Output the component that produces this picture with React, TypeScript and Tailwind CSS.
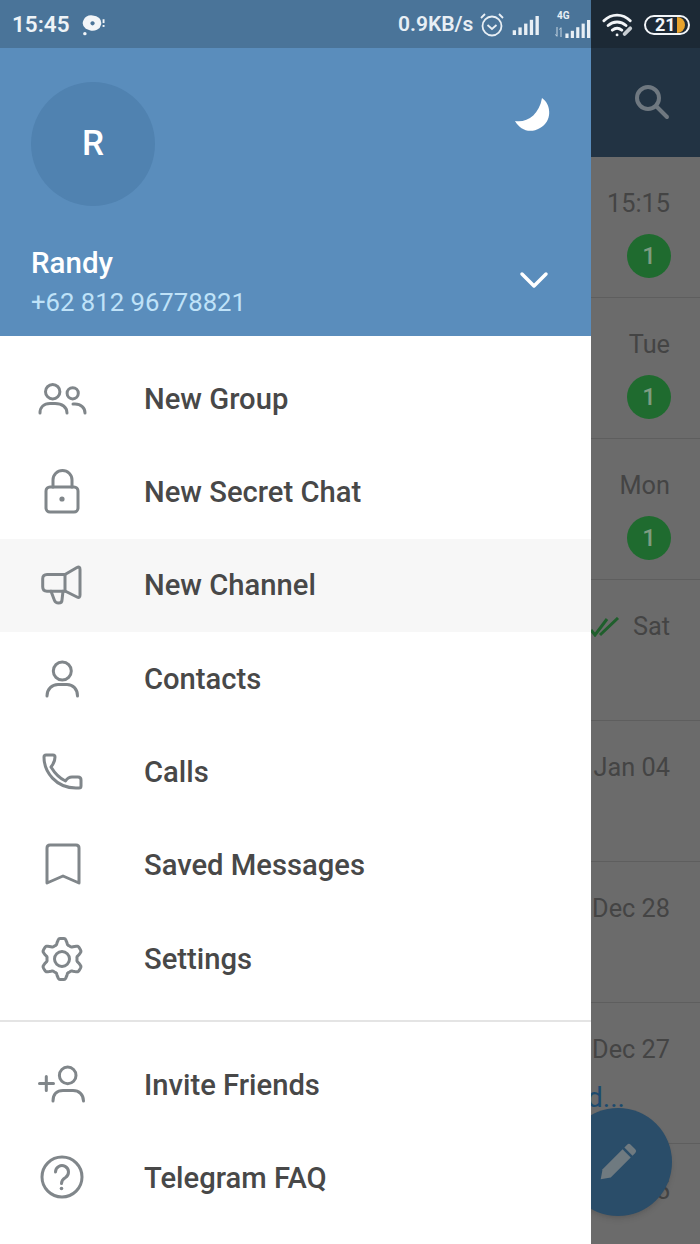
import React from "react"

const font = { fontFamily: "Roboto, sans-serif" }

// six lobed gear outline, telegram style
const gearPath = () => {
  const pts: string[] = []
  for (let i = 0; i < 120; i++) {
    const a = (i / 120) * Math.PI * 2
    const c = Math.max(-1, Math.min(1, 1.5 * Math.cos(6 * a)))
    const r = 17.8 - 2.8 * c
    pts.push(`${(30 + r * Math.cos(a)).toFixed(2)} ${(30 + r * Math.sin(a)).toFixed(2)}`)
  }
  return `M${pts.join("L")}Z`
}

const Icon = ({ children }: { children: React.ReactNode }) => (
  <svg
    width="60"
    height="60"
    viewBox="0 0 60 60"
    fill="none"
    stroke="#80868a"
    strokeWidth="3"
    strokeLinecap="round"
    strokeLinejoin="round"
    className="shrink-0"
  >
    {children}
  </svg>
)

const menu: { label: string; active?: boolean; icon: React.ReactNode }[] = [
  {
    label: "New Group",
    icon: (
      <>
        <circle cx="20.7" cy="22.7" r="7.2" />
        <circle cx="40.7" cy="24.3" r="5.6" />
        <path d="M8 44c0-6 4-9.500 10-9.500h5c7 0 12 3.500 12 9.500" />
        <path d="M41 35h2c6 0 10 4 10 9" />
      </>
    ),
  },
  {
    label: "New Secret Chat",
    icon: (
      <>
        <rect x="14" y="25" width="32" height="25" rx="4" />
        <path d="M21 25v-7a9.500 9.500 0 0 1 19 0v7" />
        <circle cx="30" cy="37" r="2.600" fill="#80868a" stroke="none" />
      </>
    ),
  },
  {
    label: "New Channel",
    active: true,
    icon: (
      <>
        <path d="M33 19.500H15q-4.300 0-4.300 4.300v8q0 4.400 4.300 4.400h18z" />
        <path d="M33 19.500l12-7q3-1.500 3 2v25.500q0 3.500-3 2l-12-6" />
        <path d="M19 36.200l3.500 9.300q1 2.500 4 2.500 3.500 0 3.500-3l1-8.800" />
      </>
    ),
  },
  {
    label: "Contacts",
    icon: (
      <>
        <circle cx="30.300" cy="22" r="9" />
        <path d="M15 47c0-7 5-11.500 11-11.500h9c6 0 10.500 4.500 10.500 11.500" />
      </>
    ),
  },
  {
    label: "Calls",
    icon: (
      <path d="M12 15C12 30 24 46 44 46h3q2 0 2-2v-6q0-3-3-3h-6q-4 0-6.500 4C27 36 22 30 19 25q4-5 4-10 0-2-2-2h-7q-2 0-2 2z" />
    ),
  },
  {
    label: "Saved Messages",
    icon: <path d="M15 48V13q0-3 3-3h26q3 0 3 3v35l-16-7z" />,
  },
  {
    label: "Settings",
    icon: (
      <>
        <path d={gearPath()} />
        <circle cx="30" cy="30" r="7.500" />
      </>
    ),
  },
]

const menu2: { label: string; icon: React.ReactNode }[] = [
  {
    label: "Invite Friends",
    icon: (
      <>
        <path d="M7.500 28.500h14M14.300 21.500v14" />
        <circle cx="35.700" cy="20.400" r="8.300" />
        <path d="M21 46c0-7 4-10.500 10-10.500h10c6 0 10.500 4 10.500 10.500" />
      </>
    ),
  },
  {
    label: "Telegram FAQ",
    icon: (
      <>
        <circle cx="30" cy="29" r="20" />
        <path d="M23.500 24a6.500 6.500 0 1 1 10 5.500c-2.500 1.500-4 3-4 6" />
        <circle cx="29.500" cy="40.500" r="1.800" fill="#80868a" stroke="none" />
      </>
    ),
  },
]

const MenuRow = ({ label, icon, active }: { label: string; icon: React.ReactNode; active?: boolean }) => (
  <div className={`flex h-[93.33px] items-center gap-[52px] pl-[32px] ${active ? "bg-[#f7f7f7]" : ""}`}>
    <Icon>{icon}</Icon>
    <span className="pt-[2px] text-[29.2px] font-medium text-[#484848]">{label}</span>
  </div>
)

const Bars = ({ w, h }: { w: number; h: number }) => (
  <svg width={w} height={h} viewBox="0 0 28 20" fill="#e8eff5" className="shrink-0">
    <rect x="0" y="15" width="3.500" height="5" />
    <rect x="6" y="12" width="3.500" height="8" />
    <rect x="12" y="8" width="3.500" height="12" />
    <rect x="18" y="4" width="3.500" height="16" />
    <rect x="24" y="0" width="3.500" height="20" />
  </svg>
)

const chats = [
  { time: "15:15", badge: true },
  { time: "Tue", badge: true },
  { time: "Mon", badge: true },
  { time: "Sat", check: true },
  { time: "Jan 04" },
  { time: "Dec 28" },
  { time: "Dec 27", preview: "d..." },
  { time: "Dec 25" },
]

export default function App() {
  return (
    <div className="flex h-[1244px] w-[700px] overflow-hidden bg-white" style={font}>
      {/* drawer */}
      <div className="flex h-full w-[591px] shrink-0 flex-col bg-white">
        <div className="flex h-[48px] items-center justify-between overflow-hidden bg-[#4a7499] pl-[12px] pt-[2px] text-white">
          <div className="flex items-center gap-[12px]">
            <span className="text-[22.500px] font-semibold text-[#eef3f7]">15:45</span>
            <svg width="23" height="22" viewBox="0 0 24 22" fill="#f2f5f8">
              <path fillRule="evenodd" d="M11 1a9 8 0 1 1-3 15.500L4 15a9 8 0 0 1 7-14zm0 6a2.200 2.200 0 1 0 .01 0z" />
              <circle cx="3" cy="20" r="1.800" />
              <rect x="21.500" y="5" width="2" height="4" />
              <rect x="21.500" y="11" width="2" height="2" />
            </svg>
          </div>
          <div className="flex w-[193px] shrink-0 items-center">
            <span className="w-[82px] shrink-0 text-[21px] font-semibold text-[#e8eff5]">0.9KB/s</span>
            <svg width="24" height="26" viewBox="0 0 24 26" fill="none" stroke="#e8eff5" strokeWidth="1.800" className="shrink-0">
              <circle cx="12" cy="14" r="9.500" />
              <path d="M7.500 13l4.500 4 4.500-4" />
              <path d="M1 6l4-4M23 6l-4-4" />
            </svg>
            <div className="ml-[8px] shrink-0">
              <Bars w={28} h={19} />
            </div>
            <div className="relative ml-[15px] h-[30px] w-[36px] shrink-0">
              <span className="absolute left-[2px] top-[0px] text-[10px] font-bold leading-[12px] text-[#e8eff5]">4G</span>
              <svg width="8" height="10" viewBox="0 0 8 10" stroke="#c9d8e4" strokeWidth="1" className="absolute bottom-[3px] left-[0px]">
                <path d="M2 0v9M0.500 7.500L2 9.500M6 10V1M4.500 2.500L6 0.500" />
              </svg>
              <div className="absolute bottom-[2px] left-[9px]">
                <Bars w={28} h={18} />
              </div>
            </div>
          </div>
        </div>

        <div className="flex h-[288px] justify-between bg-[#5a8dbc]">
          <div className="pl-[31px] pt-[34px]">
            <div className="flex h-[124px] w-[124px] items-center justify-center rounded-full bg-[#5082b0] text-[35px] font-medium text-white">
              R
            </div>
            <div className="mt-[39px] h-[36px] text-[29.500px] font-medium leading-[36px] text-white">Randy</div>
            <div className="mt-[3px] h-[36px] text-[25.700px] leading-[36px] text-[#bfe2f8]">+62 812 96778821</div>
          </div>
          <div className="flex flex-col items-end justify-between pb-[47px] pr-[38px] pt-[48px]">
            <svg width="40" height="40" viewBox="0 0 40 40" fill="#ffffff">
              <path d="M29 2C39 9 39 26 27 32 17 38 7 34 2 25 14 27 26 19 29 2z" />
            </svg>
            <svg width="30" height="18" viewBox="0 0 30 18" fill="none" stroke="#ffffff" strokeWidth="3.500" strokeLinecap="round" strokeLinejoin="round" className="mr-[4px]">
              <path d="M3 3l12 12L27 3" />
            </svg>
          </div>
        </div>

        <div className="pb-[15px] pt-[16px]">
          {menu.map((m) => (
            <MenuRow key={m.label} label={m.label} icon={m.icon} active={m.active} />
          ))}
        </div>
        <div className="h-[2px] bg-[#e4e4e4]" />
        <div className="pt-[16px]">
          {menu2.map((m) => (
            <MenuRow key={m.label} label={m.label} icon={m.icon} />
          ))}
        </div>
      </div>

      {/* dimmed chat list */}
      <div className="relative h-full flex-1 overflow-hidden bg-[#6b6b6b]">
        <div className="flex h-[48px] items-center justify-end gap-[10px] bg-[#1c2935] pr-[10px] pt-[2px]">
          <svg width="32" height="25" viewBox="0 0 34 26" fill="none" stroke="#f2f5f8" strokeWidth="3" strokeLinecap="round" className="shrink-0">
            <path d="M2 8c8-8 20-8 28 0M6.500 13c5.500-5 13.500-5 19 0M11 18c3-2.500 7-2.500 10 0" />
            <circle cx="16" cy="23" r="1.500" fill="#f2f5f8" stroke="none" />
            <path d="M24 22l6-6" stroke="#c8ced3" strokeWidth="4" />
          </svg>
          <div className="flex h-[20px] w-[46px] shrink-0 items-center overflow-hidden rounded-full border-2 border-[#f2f5f8] pl-[9px] text-[18px] font-bold leading-none text-[#f2f5f8]">
            21
            <span className="ml-[1px] h-[16px] w-[8px] rounded-r-full bg-[#e8a32c]" />
          </div>
        </div>
        <div className="flex h-[109px] items-start justify-end bg-[#223343] pr-[25px] pt-[34px]">
          <svg width="42" height="42" viewBox="0 0 42 42" fill="none" stroke="#6f7880" strokeWidth="4" strokeLinecap="round">
            <circle cx="15" cy="16" r="11" />
            <path d="M24 25l10 10" />
          </svg>
        </div>
        {chats.map((c) => (
          <div key={c.time} className="flex h-[141px] flex-col items-end border-b border-[#5e5e5e] pr-[30px] pt-[33px] text-[25.300px] leading-[28px] text-[#444444]">
            <div className="flex items-center">
              {c.check && (
                <svg width="32" height="20" viewBox="0 0 32 20" fill="none" stroke="#1f5f2c" strokeWidth="3" className="mr-[11px]">
                  <path d="M1 13l4 5L17 2M10 18L28 1" />
                </svg>
              )}
              {c.time}
            </div>
            {c.badge && (
              <div className="-mr-[1px] mt-[16px] flex h-[44px] w-[44px] items-center justify-center rounded-full bg-[#1f6b2f] text-[24px] font-medium text-[#7f9c82]">
                1
              </div>
            )}
            {c.preview && <div className="-ml-[4px] mt-[20px] self-start text-[28px] text-[#1c4a6e]">{c.preview}</div>}
          </div>
        ))}
        <div className="absolute bottom-[28px] right-[28px] flex h-[108px] w-[108px] items-center justify-center rounded-full bg-[#2a4d69] shadow-md">
          <svg width="40" height="40" viewBox="0 0 44 44" fill="#6f7a80">
            <path d="M3 41l2-11L27 8l9 9-22 22z" />
            <path d="M29 6l3-3q2-2 4 0l5 5q2 2 0 4l-3 3z" />
          </svg>
        </div>
      </div>
    </div>
  )
}
